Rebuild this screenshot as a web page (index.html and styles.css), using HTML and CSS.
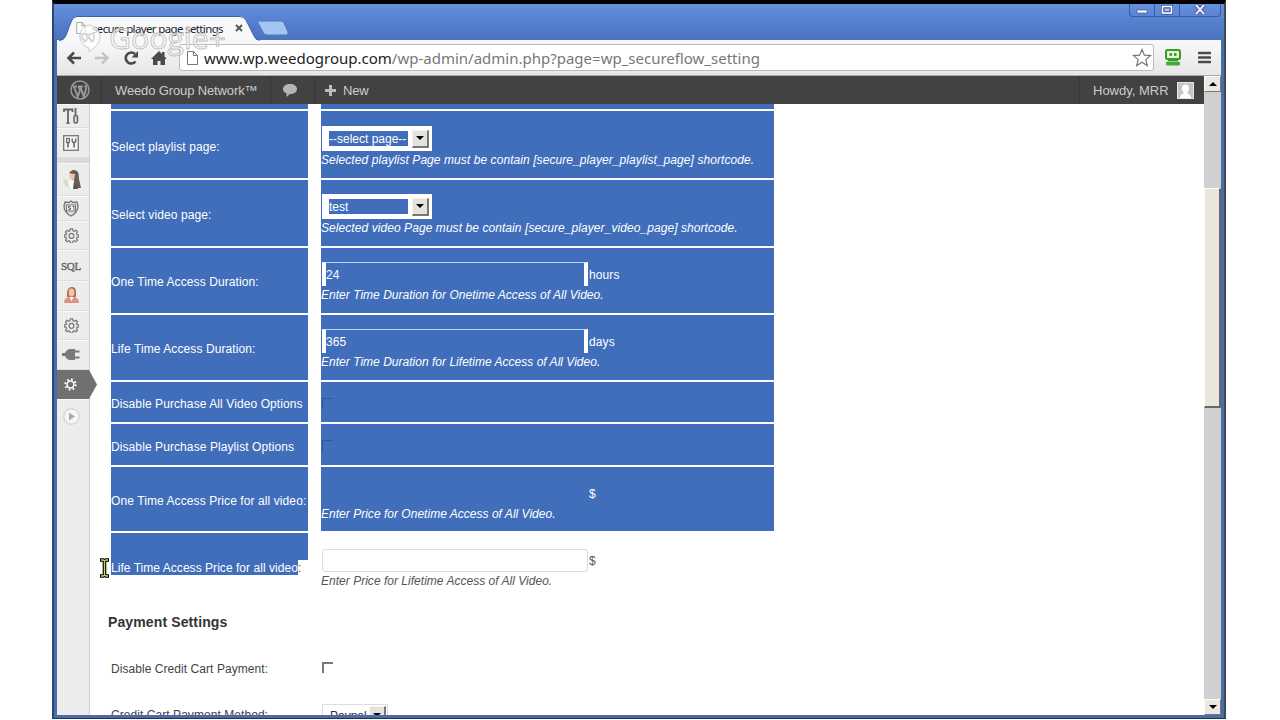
FILE: index.html
```html
<!DOCTYPE html>
<html lang="en">
<head>
  <meta charset="UTF-8">
  <title>secure player page settings</title>
  <link rel="stylesheet" href="styles.css">
</head>
<body>
  <svg width="0" height="0" class="defs">
    <symbol id="gear" viewBox="0 0 16 16">
      <path d="M6.8 1h2.4l.4 2 1.3.6 1.8-1.2 1.7 1.8-1.1 1.7.5 1.2 2 .4v2l-2 .5-.5 1.3 1.1 1.7-1.7 1.7-1.8-1.1-1.3.5-.4 2H6.8l-.5-2-1.2-.5-1.8 1.1L1.6 13l1.2-1.7-.6-1.3-2-.5v-2l2-.4.6-1.2-1.2-1.7 1.7-1.8 1.8 1.2L6.3 3z"/>
      <circle cx="8" cy="8.4" r="2.6"/>
    </symbol>
  </svg>

  <div class="window">
    <!-- Tabs -->
    <div class="titlebar">
      <div class="tab-area">
        <svg class="tab-shape" width="236" height="26" viewBox="0 0 236 26">
          <path d="M0 26C6 24 7 20 10 11L13 4Q14 1 18 0H180Q185 0 187 4L195 20Q197 25 201 26Z" fill="#f7f8fa"/>
          <path d="M0 24.500C6 24 7 20 10 11L13 4Q14 1 18 .5H180Q185 .5 187 4L195 20Q197 24 201 24.500" fill="none" stroke="#41619c"/>
          <path d="M200 5h22q2 0 3 2l4 9q1 3-2 3h-19q-3 0-4-3l-5-9q-1-2 1-2z" fill="#a3c5f3" stroke="#5277b8"/>
        </svg>
        <svg class="tab-page" width="10" height="12" viewBox="0 0 11 14"><path d="M.5.5h6l4 4v9H.5zM6.500.5v4h4" fill="#fff" stroke="#999"/></svg>
        <span class="tab-title">secure player page settings</span>
        <svg class="tab-close" width="8" height="8" viewBox="0 0 8 8"><path d="M1 1l6 6M7 1L1 7" stroke="#555" stroke-width="1.8"/></svg>
      </div>
      <div class="win-buttons">
        <span><svg width="12" height="10"><rect x="1" y="5" width="10" height="3" fill="#fff" stroke="#38549a" stroke-width=".7"/></svg></span>
        <span><svg width="14" height="10"><rect x="2.5" y="1.5" width="9" height="6.5" fill="none" stroke="#2f4b8c" stroke-width="3"/><rect x="2.5" y="1.5" width="9" height="6.5" fill="none" stroke="#fff" stroke-width="1.6"/><path d="M5 5h4" stroke="#fff"/></svg></span>
        <span class="wide"><svg width="12" height="10"><path d="M2 0l8 9M10 0L2 9" stroke="#2f4b8c" stroke-width="3.6"/><path d="M2 0l8 9M10 0L2 9" stroke="#eef" stroke-width="2"/></svg></span>
      </div>
    </div>

    <!-- Address bar -->
    <div class="toolbar">
      <svg width="16" height="16" viewBox="0 0 16 16"><path d="M15 8H3M8 2.5L2.5 8 8 13.5" fill="none" stroke="#4b4b4b" stroke-width="2.6"/></svg>
      <svg width="16" height="16" viewBox="0 0 16 16"><path d="M1 8h12M8 2.5L13.500 8 8 13.500" fill="none" stroke="#c3c3c3" stroke-width="2.400"/></svg>
      <svg width="16" height="16" viewBox="0 0 16 16"><path d="M12.500 11.500A5.500 5.500 0 1 1 12 4" fill="none" stroke="#4b4b4b" stroke-width="2.600"/><path d="M15 1v6.500H8.500z" fill="#4b4b4b"/></svg>
      <svg width="16" height="16" viewBox="0 0 16 16"><path d="M8 1l3 3V2h2.500v4.500L16 9h-2v6H9.500v-4h-3v4H2V9H0z" fill="#4b4b4b"/></svg>
      <div class="address">
        <svg width="11" height="14" viewBox="0 0 11 14"><path d="M.5.5h6l4 4v9H.5zM6.500.5v4h4" fill="#fff" stroke="#777"/></svg>
        <span class="url">www.wp.weedogroup.com<i>/wp-admin/admin.php?page=wp_secureflow_setting</i></span>
        <svg class="star" width="20" height="19" viewBox="0 0 20 19"><path d="M10 1.500l2.400 5.700 6.100.4-4.700 4 1.500 6L10 14.300 4.700 17.600l1.500-6-4.700-4 6.100-.4z" fill="#fff" stroke="#777" stroke-width="1.200"/></svg>
      </div>
      <svg class="robo" width="16" height="17" viewBox="0 0 16 17"><rect x="1" y="1" width="14" height="9" rx="1.500" fill="#dff5d5" stroke="#3a9b2c" stroke-width="2"/><path d="M4.500 5.500h2.500M9 5.500h2.500" stroke="#2d8a22" stroke-width="2.500"/><path d="M3 11.500h10" stroke="#3a9b2c"/><rect x="1" y="12.500" width="14" height="4" rx="1.500" fill="#49a83b"/></svg>
      <svg width="13" height="13" viewBox="0 0 13 13"><path d="M1 2h11M1 6.500h11M1 11h11" stroke="#4b4b4b" stroke-width="2.600" stroke-linecap="round"/></svg>
    </div>

    <div class="viewport">
      <div class="page">
        <div class="adminbar">
          <div class="ab-logo"><svg width="20" height="20" viewBox="0 0 20 20"><circle cx="10" cy="10" r="9" fill="none" stroke="#999" stroke-width="1.500"/><path d="M4 7l3.800 9.500L10 10 8.500 6.500M3 6.500h4M8 6.500h5M10.500 7l3.200 9.500L16 9.500q.5-3-1.500-4" fill="none" stroke="#999" stroke-width="2"/></svg></div>
          <div class="ab-site">Weedo Group Network™</div>
          <div class="ab-comment"><svg width="14" height="13" viewBox="0 0 14 13"><path d="M7 0c4 0 7 2 7 5s-3 5-7 5l-3.500 3V9.300C1 8.500 0 7 0 5c0-3 3-5 7-5z" fill="#b5b5b5"/></svg></div>
          <div class="ab-new"><svg width="11" height="11"><path d="M5.500 0v11M0 5.500h11" stroke="#bbb" stroke-width="3"/></svg>New</div>
          <div class="ab-user">Howdy, MRR<svg width="17" height="17" viewBox="0 0 17 17"><rect width="17" height="17" fill="#e6e6e6"/><rect x="1" y="1" width="15" height="15" fill="#c5c5c5"/><path d="M8.500 2.500c5 0 4 7 1.500 8 0 1 4 1.500 4 5.500H3c0-4 4-4.500 4-5.500-2.500-1-3.500-8 1.500-8z" fill="#fff"/></svg></div>
        </div>

        <div class="content">
          <div class="menu">
            <div class="item first"><svg width="17" height="17" viewBox="0 0 17 17"><path d="M1 4V1.500h8.500V4M5 2.500V15M3.500 15.200h3M12.500 0v7" fill="none" stroke="#666" stroke-width="1.800"/><rect x="11" y="7.500" width="3.500" height="7.500" rx="1.500" fill="#ddd" stroke="#666" stroke-width="1.500"/></svg></div>
            <div class="item"><svg width="16" height="16" viewBox="0 0 16 16"><rect x=".7" y=".7" width="14.600" height="14.600" fill="#f6f6f6" stroke="#777" stroke-width="1.300"/><path d="M5 8v4.500M11 8v4.500" stroke="#666" stroke-width="1.600"/><rect x="3.600" y="3.500" width="2.800" height="4" fill="none" stroke="#666" stroke-width="1.200"/><path d="M9.200 3.500v2.700q1.800 3 3.600 0V3.500" fill="none" stroke="#666" stroke-width="1.400"/></svg></div>
            <div class="sep"></div>
            <div class="item tall"><svg width="20" height="21" viewBox="0 0 20 21"><path d="M0 9l5 3 3 8-6-3z" fill="#cfe3cc"/><path d="M7 3q4-4 8 0 1 3 1 7l2 9h-6z" fill="#6a5d52"/><path d="M6 4q4-3 6 1l-1 6-4-1z" fill="#e8c9b4"/><path d="M6 4q4-5 8 0l-3 1z" fill="#6f5a48"/><path d="M5 12l6-1 1 9H7z" fill="#fafafa"/><path d="M11 12l4 8h-5z" fill="#5a5753"/></svg></div>
            <div class="item short"><svg width="16" height="17" viewBox="0 0 16 17"><path d="M8 1l2 1.500 4-.5 1 4c0 5-3 8-7 10-4-2-7-5-7-10l1-4 4 .5z" fill="#ddd" stroke="#777" stroke-width="1.300"/><rect x="3.500" y="5" width="9" height="6" fill="#f4f4f4" stroke="#777"/><path d="M7.500 6.500h-2V8h2v1.500h-2M9.500 6.500h1.500V10" fill="none" stroke="#666"/></svg></div>
            <div class="item"><svg class="gear" width="15" height="15"><use href="#gear"/></svg></div>
            <div class="item sql">SQL</div>
            <div class="item"><svg width="15" height="17" viewBox="0 0 15 17"><path d="M3 10V5q1-5 5-5t4 5v5z" fill="#b56d4c"/><ellipse cx="7.500" cy="5.500" rx="2.800" ry="4" fill="#efc5a8"/><path d="M0 16q0-5 5-6l2.500 2L10 10q5 1 5 6z" fill="#dc9189"/><path d="M5.500 10h4l-2 4z" fill="#fff"/></svg></div>
            <div class="item"><svg class="gear" width="15" height="15"><use href="#gear"/></svg></div>
            <div class="item"><svg width="18" height="13" viewBox="0 0 18 13"><path d="M0 5h3q2-4 5-4h5v11H8Q5 12 3 8H0z" fill="#7a7a7a"/><path d="M13 3.500h4.500M13 9.500h4.500" stroke="#777" stroke-width="2"/></svg></div>
            <div class="item active"><svg width="13" height="13" viewBox="0 0 13 13"><circle cx="6.500" cy="6.500" r="3.400" fill="none" stroke="#fff" stroke-width="1.500"/><circle cx="6.500" cy="6.500" r="5.200" fill="none" stroke="#fff" stroke-width="2" stroke-dasharray="1.700 2.384"/></svg><svg class="arrow" width="8" height="29" viewBox="0 0 8 29"><path d="M0 0l8 14.500L0 29z" fill="#707070"/></svg></div>
            <div class="item last"><svg width="17" height="17" viewBox="0 0 17 17"><circle cx="8.500" cy="8.500" r="7.700" fill="#f5f5f5" stroke="#c7c7c7"/><path d="M6 4.500l6 4-6 4z" fill="#aaa"/></svg></div>
          </div>

          <div class="settings">
            <div class="form-table">
              <div class="cell"></div><div class="cell"></div>

              <div class="cell label">Select playlist page:</div>
              <div class="cell field pick">
                <div class="select"><span>--select page--</span><b></b></div>
                <em>Selected playlist Page must be contain [secure_player_playlist_page] shortcode.</em>
              </div>

              <div class="cell label">Select video page:</div>
              <div class="cell field pick second">
                <div class="select"><span>test</span><b></b></div>
                <em>Selected video Page must be contain [secure_player_video_page] shortcode.</em>
              </div>

              <div class="cell label up1">One Time Access Duration:</div>
              <div class="cell field">
                <div class="line"><div class="input">24</div>hours</div>
                <em>Enter Time Duration for Onetime Access of All Video.</em>
              </div>

              <div class="cell label up1">Life Time Access Duration:</div>
              <div class="cell field">
                <div class="line"><div class="input">365</div>days</div>
                <em>Enter Time Duration for Lifetime Access of All Video.</em>
              </div>

              <div class="cell label">Disable Purchase All Video Options</div>
              <div class="cell check"><div class="checkbox"></div></div>

              <div class="cell label">Disable Purchase Playlist Options</div>
              <div class="cell check"><div class="checkbox"></div></div>

              <div class="cell label">One Time Access Price for all video:</div>
              <div class="cell field">
                <div class="line"><div class="input hidden"></div>$</div>
                <em>Enter Price for Onetime Access of All Video.</em>
              </div>

              <div class="partial">
                <div class="fill"></div>
                <div class="text-line"><svg class="ibeam" width="11" height="20" viewBox="0 0 11 20"><path d="M1 2h3l1.500 1L7 2h3M5.500 3v14M1 18h3l1.500-1L7 18h3" fill="none" stroke="#000" stroke-width="3.600"/><path d="M5.500 3v14M2 2h2l1.500 1L7 2h2M2 18h2l1.500-1L7 18h2" fill="none" stroke="#c6d96a" stroke-width="1.300"/></svg><span>Life Time Access Price for all video</span>:</div>
              </div>
              <div class="field plain">
                <div class="line"><div class="input"></div>$</div>
                <em>Enter Price for Lifetime Access of All Video.</em>
              </div>
            </div>

            <h3>Payment Settings</h3>
            <div class="form-table payment">
              <div class="row-label">Disable Credit Cart Payment:</div>
              <div class="row-check"><div class="checkbox dark"></div></div>
              <div class="row-label">Credit Cart Payment Method:</div>
              <div class="row-select"><div class="select small"><span>Paypal</span><b></b></div></div>
            </div>
          </div>
        </div>
      </div>

      <div class="scrollbar">
        <div class="sb-button up"></div>
        <div class="thumb"></div>
        <div class="sb-button down"></div>
      </div>
    </div>

    <!-- Hangout watermark over the tab -->
    <svg class="watermark" width="155" height="42" viewBox="0 0 155 42">
      <path d="M13 3a12 12 0 0 1 12 12c0 7-5 10-11 15v-4A12 12 0 0 1 13 3z" fill="#fff" fill-opacity=".7" stroke="#ccc"/>
      <path d="M7 12h5v5q0 2-3 3v-3H7zM14 12h5v5q0 2-3 3v-3h-2z" fill="none" stroke="#bbb"/>
      <text x="34" y="27" textLength="117" lengthAdjust="spacingAndGlyphs">Google+</text>
    </svg>
  </div>
</body>
</html>
```
FILE: styles.css
```css
* {
  box-sizing: border-box;
}
body {
  margin: 0;
  width: 1280px;
  height: 720px;
  overflow: hidden;
  background: #fff;
  font-family: "Liberation Sans", Arial, sans-serif;
  font-size: 12px;
  color: #444;
}
svg {
  display: block;
  flex: none;
}
.defs {
  position: absolute;
}
.window {
  position: relative;
  display: flex;
  flex-direction: column;
  width: 1174px;
  height: 719px;
  margin-left: 52px;
  border-top: 4px solid #000;
  border-left: 2px solid #2e4676;
  border-right: 2px solid #3b4b52;
  border-bottom: 1px solid #1f3157;
  background: #4a6ca8;
}

/* title bar */
.titlebar {
  display: flex;
  justify-content: space-between;
  height: 36px;
  background: linear-gradient(#6590dc, #5079c8 70%, #4b72be);
}
.tab-area {
  position: relative;
  display: flex;
  align-items: center;
  width: 240px;
  margin: 12px 0 0 5px;
  height: 24px;
}
.tab-shape {
  position: absolute;
  left: 0;
  top: 0;
}
.tab-page {
  position: relative;
  margin-left: 17px;
}
.tab-title {
  position: relative;
  width: 131px;
  margin-left: 6px;
  font: 11.5px "Noto Sans", sans-serif;
  letter-spacing: -0.64px;
  color: #222;
  white-space: nowrap;
}
.tab-close {
  position: relative;
  margin-left: 12px;
}
.win-buttons {
  display: flex;
  height: 13px;
  margin-right: 3px;
  border: 1px solid #3b5b9e;
  border-top: 0;
  border-radius: 0 0 4px 4px;
}
.win-buttons span {
  display: flex;
  justify-content: center;
  align-items: center;
  width: 25px;
  border-right: 1px solid #3b5b9e;
}
.win-buttons .wide {
  width: 40px;
  border-right: 0;
}

/* address bar */
.toolbar {
  display: flex;
  align-items: center;
  gap: 12px;
  height: 36px;
  margin: 0 3px;
  padding: 0 10px 0 9px;
  background: linear-gradient(#f8f9fa, #e6e6e6);
  border-bottom: 1px solid #aaa;
}
.toolbar > svg:nth-child(3) {
  margin-left: 1px;
}
.address {
  display: flex;
  align-items: center;
  flex: 1;
  height: 27px;
  margin-right: -2px;
  padding: 0 1px 0 7px;
  background: #fff;
  border: 1px solid #bbb;
  border-radius: 3px;
}
.url {
  margin-left: 6px;
  font: 15px "Noto Sans", sans-serif;
  color: #222;
  white-space: nowrap;
}
.url i {
  font-style: normal;
  color: #777;
}
.star {
  margin-left: auto;
}
.robo {
  margin: 0 5px 0 1px;
}

.viewport {
  display: flex;
  height: 639px;
  margin: 0 3px;
  background: #fff;
  overflow: hidden;
}
.page {
  width: 1147px;
}

/* admin bar */
.adminbar {
  display: flex;
  height: 28px;
  background: #424242;
  color: #ccc;
  font-size: 13px;
  letter-spacing: -0.13px;
}
.adminbar > div {
  display: flex;
  align-items: center;
  border-right: 1px solid #383838;
}
.ab-logo {
  width: 45px;
  padding-left: 13px;
}
.ab-site {
  width: 169px;
  padding-left: 13px;
}
.ab-comment {
  width: 44px;
  padding-left: 12px;
}
.ab-new {
  gap: 7px;
  padding-left: 10px;
  flex: 1;
}
.adminbar .ab-user {
  width: 124px;
  padding-left: 13px;
  gap: 8px;
  letter-spacing: 0;
  border: 0;
}

/* collapsed side menu */
.content {
  display: flex;
  height: 611px;
}
.menu {
  width: 33px;
  background: #ececec;
  border-right: 1px solid #d0d0d0;
}
.item {
  position: relative;
  display: flex;
  align-items: center;
  justify-content: center;
  height: 29.5px;
  padding-right: 4px;
  border-top: 1px solid #f8f8f8;
  border-bottom: 1px solid #dcdcdc;
}
.item.first {
  height: 24px;
}
.sep {
  height: 5px;
  background: #dadada;
}
.item.tall {
  height: 33px;
  padding-left: 3px;
}
.item.short {
  height: 25px;
}
.gear {
  fill: #eee;
  stroke: #777;
  stroke-width: 1.3;
}
.sql {
  height: 31px;
  font: 11px "Liberation Serif", serif;
  -webkit-text-stroke: 0.4px #666;
  letter-spacing: -0.3px;
  color: #666;
}
.item.active {
  background: #707070;
  border-color: #707070;
  padding-right: 5px;
}
.arrow {
  position: absolute;
  left: 32px;
  top: -1px;
}
.item.last {
  height: 33px;
  border-bottom: 0;
}

/* settings table */
.settings {
  padding-left: 21px;
}
.form-table {
  display: grid;
  grid-template-columns: 197px 453px;
  grid-template-rows: 5px 67px 66px 65px 65px 40px 41px 64px 67px;
  column-gap: 13px;
  row-gap: 2px;
}
.cell {
  background: #416eba;
  color: #fff;
}
.label {
  display: flex;
  align-items: center;
  padding-top: 4px;
  letter-spacing: 0.09px;
  white-space: nowrap;
}
.label.up1 {
  padding-top: 2px;
}
.field {
  padding-top: 14px;
}
.field.pick {
  padding-top: 15px;
}
.field.second {
  padding-top: 14px;
}
.field em {
  display: block;
  line-height: 17px;
  letter-spacing: 0.02px;
  white-space: nowrap;
}
.field.pick em {
  line-height: 18px;
  letter-spacing: 0.07px;
}
.select {
  display: flex;
  align-items: center;
  width: 110px;
  height: 25px;
  margin-left: 1px;
  padding: 0 3px 0 7px;
  background: #fff;
}
.select span {
  width: 79px;
  height: 15px;
  line-height: 17px;
  background: #416eba;
  color: #fff;
  white-space: nowrap;
  overflow: hidden;
}
.select b {
  display: flex;
  align-items: center;
  justify-content: center;
  width: 17px;
  height: 18px;
  margin-left: auto;
  background: #e5e2dc;
  border: 1px solid #f4f2ec;
  border-right: 2px solid #777;
  border-bottom: 2px solid #777;
}
.select b::after {
  content: "";
  border: 4px solid transparent;
  border-top-color: #000;
  border-bottom: 0;
}
.line {
  display: flex;
  height: 25px;
  line-height: 27px;
  letter-spacing: 0.1px;
}
.input {
  width: 266px;
  height: 24px;
  margin: 0 1px;
  line-height: 25px;
  border: 0 solid #fff;
  border-width: 1px 4px 0;
  border-top-color: #b8d0f2;
}
.input.hidden {
  border-color: transparent;
}
.check {
  padding: 16px 0 0 1px;
}
.checkbox {
  width: 11px;
  height: 11px;
  border-top: 1px solid #2c569f;
  border-left: 1px solid #2c569f;
}
.checkbox.dark {
  border-top: 2px solid #777;
  border-left: 2px solid #777;
}
.partial .fill {
  height: 27px;
  background: #416eba;
}
.text-line {
  position: relative;
  height: 15px;
  line-height: 16px;
  white-space: nowrap;
}
.text-line span {
  display: inline-block;
  width: 187px;
  height: 15px;
  background: #416eba;
  color: #fff;
  letter-spacing: 0.04px;
}
.ibeam {
  position: absolute;
  left: -12px;
  top: -2px;
}
.plain {
  padding-top: 15px;
  color: #555;
}
.plain .input {
  height: 23px;
  margin-top: 1px;
  border: 1px solid #ddd;
  border-radius: 3px;
}
h3 {
  margin: 13px 0 0 -3px;
  font-size: 14px;
  line-height: 18px;
  letter-spacing: 0.12px;
  color: #333;
}
.payment {
  grid-template-rows: 44px 44px;
  padding-top: 14px;
}
.row-label {
  line-height: 48px;
  letter-spacing: 0.06px;
}
.row-check {
  padding: 17px 0 0 1px;
}
.row-select {
  padding-top: 13px;
}
.select.small {
  width: 66px;
  height: 22px;
  padding-right: 1px;
  border: 1px solid #ddd;
}
.select.small span {
  width: 40px;
  background: none;
  color: #333;
}

/* scrollbar */
.scrollbar {
  width: 17px;
  background: #d0d0d0;
}
.sb-button {
  display: flex;
  align-items: center;
  justify-content: center;
  height: 16px;
  background: #ece9e0;
  border: 1px solid #fff;
  border-right-color: #777;
  border-bottom-color: #777;
}
.up::after,
.down::after {
  content: "";
  border: 4px solid transparent;
}
.up::after {
  border-bottom-color: #000;
  border-top: 0;
}
.down::after {
  border-top-color: #000;
  border-bottom: 0;
}
.thumb {
  height: 220px;
  margin: 96px 0 291px;
  background: #e9e6da;
  border: 1px solid #fff;
  border-right: 2px solid #666;
  border-bottom: 2px solid #666;
}

.watermark {
  position: absolute;
  left: 21px;
  top: 18px;
}
.watermark text {
  font: 30px "Open Sans", sans-serif;
  fill: #fff;
  fill-opacity: .55;
  stroke: #bbb;
  stroke-width: .8;
}
```
